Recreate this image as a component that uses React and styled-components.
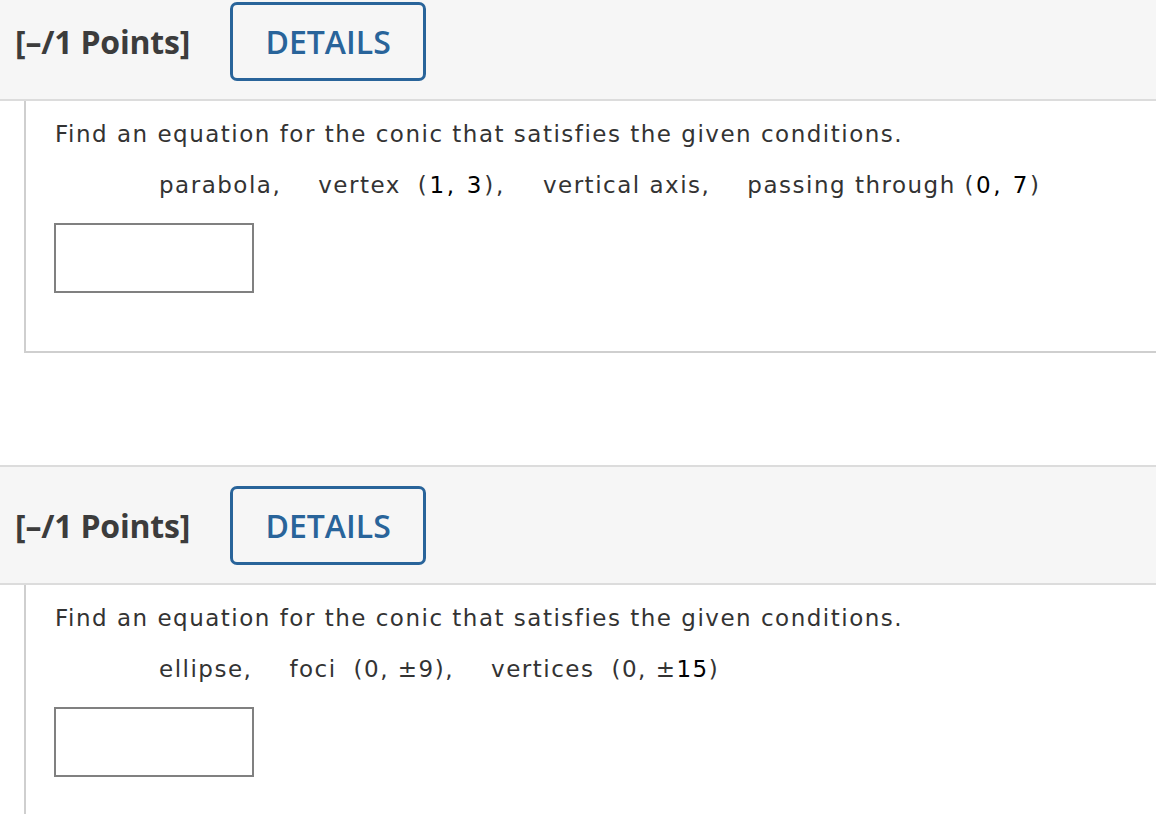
import React from "react";
import styled, { createGlobalStyle } from "styled-components";

const GlobalStyle = createGlobalStyle`
  html, body {
    margin: 0;
    padding: 0;
    background: #fff;
    overflow: hidden;
  }
  body {
    font-family: "DejaVu Sans", Verdana, sans-serif;
    color: #333;
  }
`;

/* page is scrolled a little: the first header is cut at the top */
const Page = styled.div`
  margin-top: -19px;
  display: flex;
  flex-direction: column;
`;

const Question = styled.section`
  display: flex;
  flex-direction: column;
  margin-bottom: ${props => props.gap || 0}px;
`;

const Header = styled.div`
  display: flex;
  align-items: center;
  gap: 40px;
  height: 116px;
  padding-left: 15px;
  background: #f6f6f6;
  border-top: 2px solid #dcdcdc;
  border-bottom: 2px solid #dcdcdc;
`;

const Points = styled.span`
  font-family: "Open Sans", sans-serif;
  font-weight: 700;
  font-size: 32px;
  letter-spacing: -0.2px;
  color: #3c3c3c;
`;

const DetailsButton = styled.button`
  box-sizing: border-box;
  width: 196px;
  height: 79px;
  border: 3px solid #29649a;
  border-radius: 7px;
  background: transparent;
  color: #29649a;
  font-family: "Open Sans", sans-serif;
  font-weight: 600;
  font-size: 32px;
  padding: 0;
  cursor: pointer;
`;

const Body = styled.div`
  margin-left: 24px;
  padding: 17px 0 ${props => props.bottom}px 29px;
  background: #fff;
  border-left: 2px solid #cfcfcf;
  border-bottom: ${props => (props.closed ? "2px solid #cfcfcf" : "none")};
  display: flex;
  flex-direction: column;
  align-items: flex-start;
`;

const Prompt = styled.p`
  margin: 0;
  font-size: 23px;
  letter-spacing: 1.5px;
  line-height: 33px;
  color: #333;
`;

const Conditions = styled.div`
  display: flex;
  align-items: baseline;
  gap: 37px;
  margin: 18px 0 0 104px;
  font-size: 23px;
  letter-spacing: 1.5px;
  line-height: 33px;
  color: #333;
  white-space: nowrap;
`;

const Item = styled.span`
  display: inline-flex;
  align-items: baseline;
  gap: 17px;
`;

const Coords = styled.span`
  letter-spacing: ${props => props.spacing || 1.5}px;
`;

const Num = styled.span`
  color: ${props => (props.dark ? "#000" : "#333")};
`;

const AnswerBox = styled.input`
  box-sizing: border-box;
  width: 200px;
  height: 70px;
  margin: 21px 0 0 -1px;
  border: 2px solid #808080;
  border-radius: 0;
  background: #fff;
  outline: none;
`;

const App = () => {
  return (
    <>
      <GlobalStyle />
      <Page>
        <Question gap={112}>
          <Header>
            <Points>[–/1 Points]</Points>
            <DetailsButton>DETAILS</DetailsButton>
          </Header>
          <Body bottom={58} closed>
            <Prompt>Find an equation for the conic that satisfies the given conditions.</Prompt>
            <Conditions>
              <Item>parabola,</Item>
              <Item>
                vertex
                <Coords spacing={2.7}>
                  (<Num dark>1, 3</Num>),
                </Coords>
              </Item>
              <Item>vertical axis,</Item>
              <Item>
                <span>
                  passing through <Coords spacing={2.5}>(<Num dark>0, 7</Num>)</Coords>
                </span>
              </Item>
            </Conditions>
            <AnswerBox type="text" />
          </Body>
        </Question>

        <Question>
          <Header>
            <Points>[–/1 Points]</Points>
            <DetailsButton>DETAILS</DetailsButton>
          </Header>
          <Body bottom={60}>
            <Prompt>Find an equation for the conic that satisfies the given conditions.</Prompt>
            <Conditions>
              <Item>ellipse,</Item>
              <Item>
                foci
                <Coords>(0, ±9),</Coords>
              </Item>
              <Item>
                vertices
                <Coords>
                  (0, ±<Num dark>15</Num>)
                </Coords>
              </Item>
            </Conditions>
            <AnswerBox type="text" />
          </Body>
        </Question>
      </Page>
    </>
  );
};

export default App;
